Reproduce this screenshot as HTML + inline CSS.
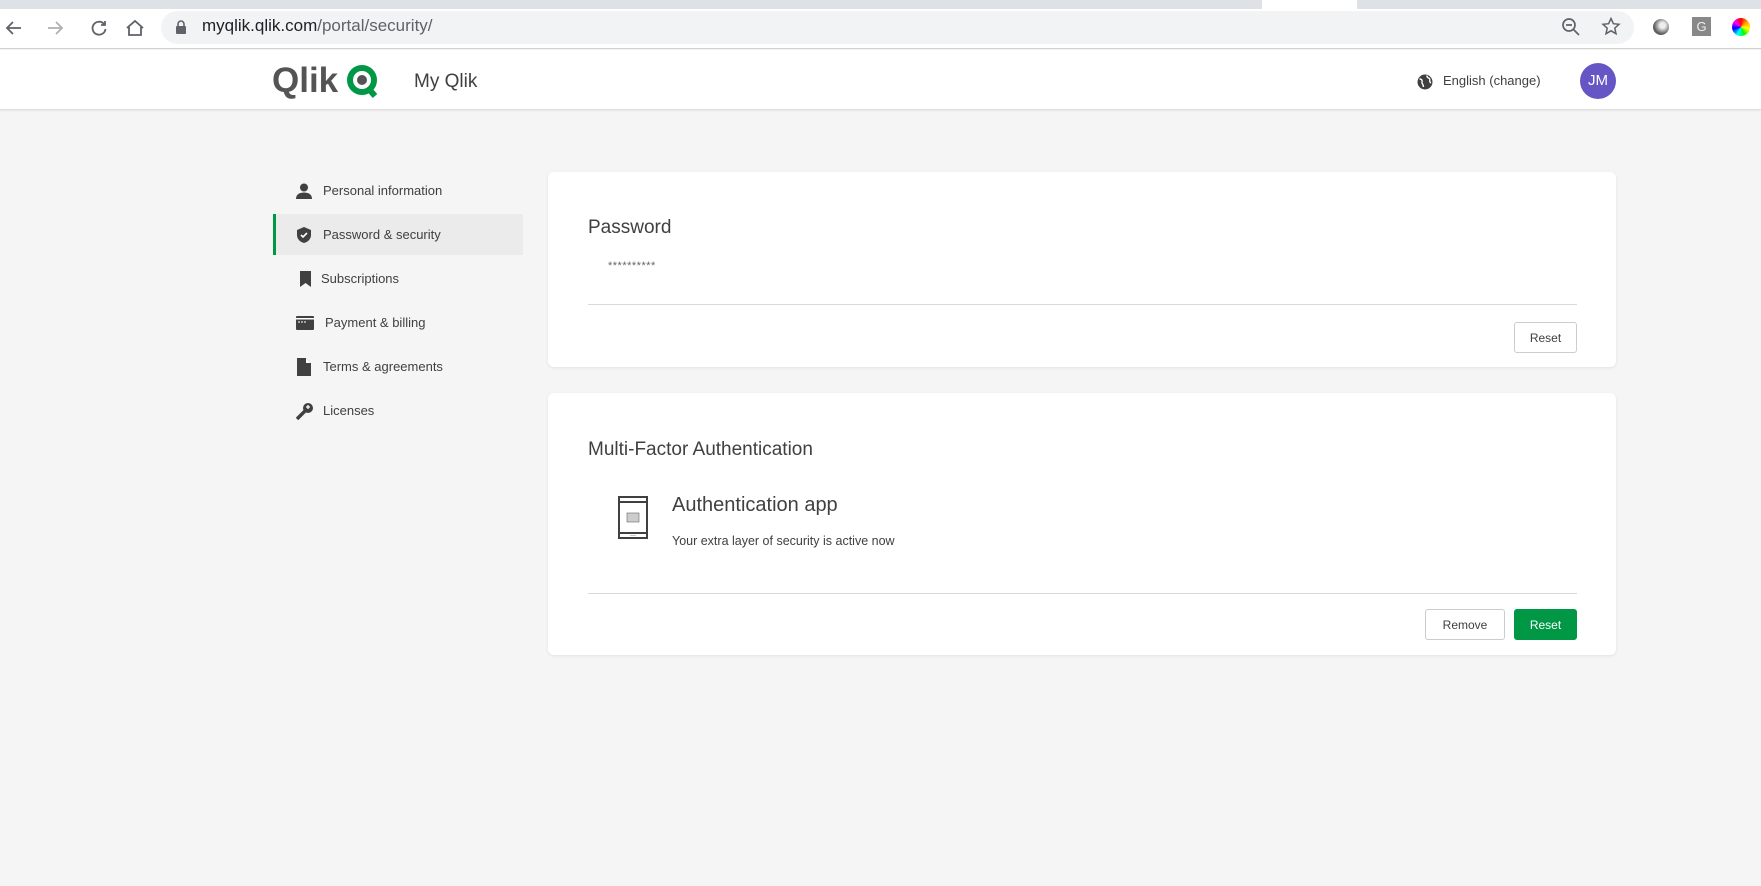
<!DOCTYPE html>
<html><head><meta charset="utf-8"><style>
*{margin:0;padding:0;box-sizing:border-box}
body{width:1761px;height:886px;background:#f5f5f5;font-family:"Liberation Sans",sans-serif;color:#404040;position:relative;overflow:hidden}
.abs{position:absolute}
.tabs{left:0;top:0;width:1761px;height:9px;background:#dee1e6}
.toolbar{left:0;top:9px;width:1761px;height:40px;background:#fff;border-bottom:1px solid #d0d0d0}
.url{left:161px;top:11px;width:1473px;height:33px;background:#f1f3f4;border-radius:17px}
.header{left:0;top:50px;width:1761px;height:60px;background:#fff;border-bottom:1px solid #ddd;box-shadow:0 1px 2px rgba(0,0,0,.06)}
.nav{left:273px;width:250px;height:41px;font-size:13px;color:#404040;display:flex;align-items:center}
.nav svg{position:absolute;left:23px}
.nav span{position:absolute;left:50px}
.card{left:548px;width:1068px;background:#fff;border-radius:6px;box-shadow:0 1px 3px rgba(0,0,0,.08)}
.btn{height:31px;border:1px solid #ccc;border-radius:3px;background:#fff;font-size:12px;color:#404040;display:flex;align-items:center;justify-content:center}
</style></head><body>
<div class="abs tabs"></div>
<div class="abs" style="left:1262px;top:0;width:95px;height:9px;background:#fff"></div>
<div class="abs toolbar"></div>
<svg class="abs" style="left:3px;top:18px" width="160" height="20" viewBox="0 0 160 20" fill="none" stroke="#5f6368" stroke-width="1.8">
<path d="M18 10H4M10 4L4 10l6 6"/>
<path d="M45 10h14M53 4l6 6-6 6" stroke="#b0b0b0"/>
<path d="M101 6a6.5 6.5 0 1 0 1.5 5M102 3v4h-4"/>
<path d="M124 10l8-7 8 7M126 9v8h12V9"/>
</svg>
<div class="abs url"></div>
<svg class="abs" style="left:175px;top:20px" width="12" height="14" viewBox="0 0 12 14"><rect x="1" y="6" width="10" height="8" rx="1" fill="#5f6368"/><path d="M3 6V4a3 3 0 0 1 6 0v2" stroke="#5f6368" stroke-width="1.6" fill="none"/></svg>
<div class="abs" style="left:202px;top:16px;font-size:17px;color:#202124">myqlik.qlik.com<span style="color:#5f6368">/portal/security/</span></div>
<svg class="abs" style="left:1561px;top:17px" width="62" height="20" viewBox="0 0 62 20" fill="none" stroke="#5f6368" stroke-width="1.7">
<circle cx="8" cy="8" r="6"/><path d="M12.5 12.5L18 18M5 8h6"/>
<path d="M50 1.5l2.4 5.2 5.6.6-4.2 3.8 1.2 5.6-5-2.9-5 2.9 1.2-5.6-4.2-3.8 5.6-.6z" stroke-width="1.5"/>
</svg>
<div class="abs" style="left:1653px;top:19px;width:16px;height:16px;border-radius:50%;background:radial-gradient(circle at 60% 40%,#eee 20%,#666 60%,#333)"></div>
<div class="abs" style="left:1692px;top:17px;width:19px;height:19px;background:#888;color:#eee;font-size:13px;text-align:center;line-height:19px">G</div>
<div class="abs" style="left:1732px;top:18px;width:18px;height:18px;border-radius:50%;background:conic-gradient(red,orange,yellow,lime,cyan,blue,magenta,red)"></div>

<div class="abs header"></div>
<div class="abs" style="left:272px;top:61px;font-size:35px;font-weight:bold;color:#545454;letter-spacing:0px;line-height:40px">Qlik</div>
<svg class="abs" style="left:346px;top:64px" width="36" height="36" viewBox="0 0 36 36"><circle cx="16" cy="16" r="12" fill="none" stroke="#009845" stroke-width="6"/><circle cx="16" cy="16" r="5" fill="#545454"/><path d="M22 24l7 8" stroke="#009845" stroke-width="6"/></svg>
<div class="abs" style="left:414px;top:71px;font-size:19px;color:#404040">My Qlik</div>
<svg class="abs" style="left:1417px;top:74px" width="16" height="16" viewBox="0 0 16 16"><circle cx="8" cy="8" r="7.5" fill="#404040"/><path d="M2.5 5c2 0 3 1 2.5 3s1.5 2 1.5 5M10 1.5c-.5 2 1.5 2.5 2.5 3s-1 3 1.5 4.5" stroke="#fff" stroke-width="1.4" fill="none"/></svg>
<div class="abs" style="left:1443px;top:73px;font-size:13px;color:#404040">English (change)</div>
<div class="abs" style="left:1580px;top:63px;width:36px;height:36px;border-radius:50%;background:#6655c4;color:#fff;font-size:15px;text-align:center;line-height:36px">JM</div>

<div class="abs nav" style="top:170px"><svg width="16" height="16" viewBox="0 0 16 16"><circle cx="8" cy="4.5" r="4" fill="#404040"/><path d="M0 16c0-5 4-6.5 8-6.5s8 1.5 8 6.5z" fill="#404040"/></svg><span>Personal information</span></div>
<div class="abs nav" style="top:214px;background:#ebebeb;border-left:3px solid #009845"><svg width="16" height="16" viewBox="0 0 16 16" style="left:20px"><path d="M8 0l7 3v5c0 4-3 7-7 8-4-1-7-4-7-8V3z" fill="#404040"/><path d="M5 8l2 2 4-4" stroke="#fff" stroke-width="1.6" fill="none"/></svg><span style="left:47px">Password &amp; security</span></div>
<div class="abs nav" style="top:258px"><svg width="16" height="16" viewBox="0 0 16 16" style="left:25px"><path d="M2 0h11v16l-5.5-4L2 16z" fill="#404040"/></svg><span style="left:48px">Subscriptions</span></div>
<div class="abs nav" style="top:302px"><svg width="18" height="14" viewBox="0 0 18 14"><rect width="18" height="14" rx="1" fill="#404040"/><path d="M2 6h8" stroke="#fff" stroke-dasharray="2 1"/><rect x="0" y="2" width="18" height="1.5" fill="#fff"/></svg><span style="left:52px">Payment &amp; billing</span></div>
<div class="abs nav" style="top:346px"><svg width="16" height="18" viewBox="0 0 16 18"><path d="M1 0h9l5 5v13H1z" fill="#404040"/><path d="M10 0v5h5" fill="#fff"/></svg><span>Terms &amp; agreements</span></div>
<div class="abs nav" style="top:390px"><svg width="18" height="18" viewBox="0 0 18 18"><circle cx="12" cy="6" r="5" fill="#404040"/><path d="M9 9l-8 8" stroke="#404040" stroke-width="3.5"/><path d="M12 3v4M10 5h4" stroke="#fff" stroke-width="1.3"/></svg><span>Licenses</span></div>

<div class="abs card" style="top:172px;height:195px"></div>
<div class="abs" style="left:588px;top:217px;font-size:19px;color:#404040">Password</div>
<div class="abs" style="left:608px;top:260px;font-size:11px;color:#666;letter-spacing:0.5px">**********</div>
<div class="abs" style="left:588px;top:304px;width:989px;height:1px;background:#d9d9d9"></div>
<div class="abs btn" style="left:1514px;top:322px;width:63px">Reset</div>

<div class="abs card" style="top:393px;height:262px"></div>
<div class="abs" style="left:588px;top:439px;font-size:19px;color:#404040">Multi-Factor Authentication</div>
<svg class="abs" style="left:618px;top:496px" width="30" height="43" viewBox="0 0 30 43"><rect x="1" y="1" width="28" height="41" fill="none" stroke="#404040" stroke-width="2"/><path d="M1 6h28M1 37h28" stroke="#404040" stroke-width="2"/><rect x="9" y="17" width="12" height="9" fill="#ccc" stroke="#666" stroke-width=".6"/><path d="M12 39.5h6" stroke="#ccc"/></svg>
<div class="abs" style="left:672px;top:494px;font-size:20px;color:#404040">Authentication app</div>
<div class="abs" style="left:672px;top:534px;font-size:12.5px;color:#404040">Your extra layer of security is active now</div>
<div class="abs" style="left:588px;top:593px;width:989px;height:1px;background:#d9d9d9"></div>
<div class="abs btn" style="left:1425px;top:609px;width:80px">Remove</div>
<div class="abs btn" style="left:1514px;top:609px;width:63px;background:#009845;border-color:#009845;color:#fff">Reset</div>
</body></html>
